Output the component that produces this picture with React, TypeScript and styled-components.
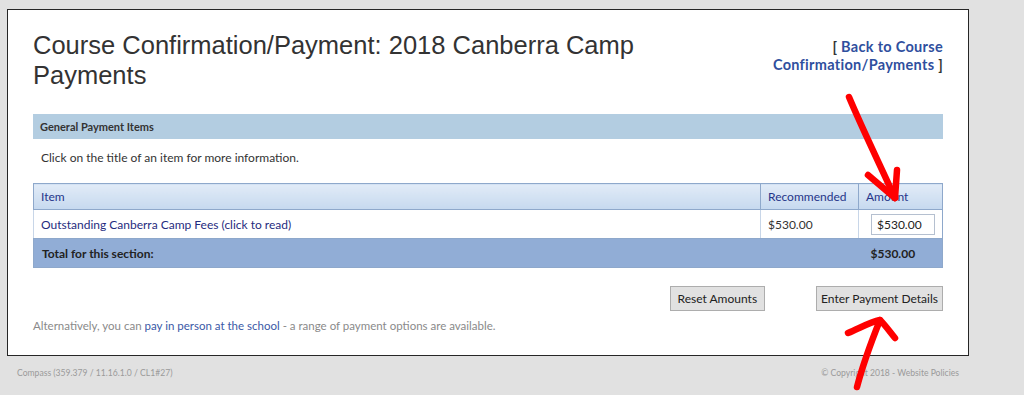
import React from "react";
import styled, { createGlobalStyle } from "styled-components";

const Global = createGlobalStyle`
  html, body {
    margin: 0;
    padding: 0;
    background: #e1e1e1;
  }
  body {
    font-family: "Lato", "Noto Sans", sans-serif;
  }
`;

const Page = styled.div`
  position: relative;
  width: 1024px;
  height: 395px;
  overflow: hidden;
  background: #e1e1e1;
`;

const Panel = styled.div`
  margin: 9px 0 0 7px;
  width: 962px;
  height: 347px;
  box-sizing: border-box;
  background: #fff;
  border: 1px solid #262626;
  padding: 20px 25px 0 25px;
  display: flex;
  flex-direction: column;
`;

const Header = styled.div`
  display: flex;
  justify-content: space-between;
  align-items: flex-start;
`;

const Title = styled.h1`
  margin: 0;
  width: 640px;
  font-family: "Liberation Sans", Arial, sans-serif;
  font-size: 25.5px;
  line-height: 30px;
  font-weight: normal;
  color: #333;
`;

const BackLink = styled.div`
  width: 200px;
  margin-top: 8px;
  text-align: right;
  font-size: 14.5px;
  line-height: 18px;
  font-weight: bold;
  letter-spacing: 0.3px;
  color: #333;
  a {
    color: #2f4f9e;
    text-decoration: none;
  }
`;

const SectionBar = styled.div`
  margin-top: 24px;
  height: 25px;
  line-height: 25px;
  padding-left: 7px;
  background: #b3cde1;
  font-size: 11px;
  font-weight: bold;
  color: #333;
`;

const Intro = styled.p`
  margin: 0;
  padding: 11px 8px 0;
  height: 44px;
  box-sizing: border-box;
  font-size: 12px;
  line-height: 16px;
  color: #333;
`;

const Table = styled.table`
  width: 100%;
  border-collapse: collapse;
  border: 1px solid #8ea8cb;
  font-size: 12px;
`;

const HeadCell = styled.th<{ $w?: number }>`
  height: 25px;
  padding: 0 7px;
  text-align: left;
  font-weight: normal;
  color: #26368a;
  background: linear-gradient(#e1ebf7, #c6d9ef);
  border-left: 1px solid #8ea8cb;
  border-bottom: 1px solid #8ea8cb;
  width: ${(p) => (p.$w ? `${p.$w}px` : "auto")};
`;

const Cell = styled.td`
  height: 28px;
  padding: 0 7px;
  color: #333;
  border-left: 1px solid #c8d6e8;
  border-bottom: 1px solid #8ea8cb;
  a {
    color: #1f2c80;
    text-decoration: none;
  }
`;

const TotalCell = styled.td<{ $amount?: boolean }>`
  height: 28px;
  padding: ${(p) => (p.$amount ? "0 0 0 12px" : "0 8px")};
  background: #91add6;
  font-weight: bold;
  color: #222;
`;

const AmountInput = styled.input`
  width: 64px;
  height: 21px;
  box-sizing: border-box;
  margin-left: 5px;
  padding: 0 5px;
  border: 1px solid #b5c0d0;
  font-family: inherit;
  font-size: 12px;
  color: #222;
`;

const Actions = styled.div`
  margin-top: 18px;
  display: flex;
  justify-content: flex-end;
  gap: 51px;
`;

const Button = styled.button<{ $pad: number }>`
  height: 25px;
  padding: 0 ${(p) => p.$pad}px;
  background: #e1e1e1;
  border: 1px solid #adadad;
  font-family: inherit;
  font-size: 12px;
  color: #222;
`;

const Note = styled.p`
  margin: 8px 0 0;
  font-size: 11.5px;
  color: #8a8a8a;
  a {
    color: #3a59a6;
    text-decoration: none;
  }
`;

const Footer = styled.div`
  display: flex;
  justify-content: space-between;
  padding: 12px 65px 0 17px;
  font-size: 8.6px;
  color: #9a9a9a;
`;

const Annotation = styled.svg`
  position: absolute;
  left: 0;
  top: 0;
  pointer-events: none;
`;

export default function App() {
  return (
    <Page>
      <Global />
      <Panel>
        <Header>
          <Title>Course Confirmation/Payment: 2018 Canberra Camp Payments</Title>
          <BackLink>
            [ <a href="#">Back to Course Confirmation/Payments</a> ]
          </BackLink>
        </Header>
        <SectionBar>General Payment Items</SectionBar>
        <Intro>Click on the title of an item for more information.</Intro>
        <Table>
          <thead>
            <tr>
              <HeadCell>Item</HeadCell>
              <HeadCell $w={83}>Recommended</HeadCell>
              <HeadCell $w={66}>Amount</HeadCell>
            </tr>
          </thead>
          <tbody>
            <tr>
              <Cell>
                <a href="#">Outstanding Canberra Camp Fees (click to read)</a>
              </Cell>
              <Cell>$530.00</Cell>
              <Cell>
                <AmountInput defaultValue="$530.00" />
              </Cell>
            </tr>
            <tr>
              <TotalCell colSpan={2}>Total for this section:</TotalCell>
              <TotalCell $amount>$530.00</TotalCell>
            </tr>
          </tbody>
        </Table>
        <Actions>
          <Button $pad={7}>Reset Amounts</Button>
          <Button $pad={4}>Enter Payment Details</Button>
        </Actions>
        <Note>
          Alternatively, you can <a href="#">pay in person at the school</a> - a range of
          payment options are available.
        </Note>
      </Panel>
      <Footer>
        <span>Compass (359.379 / 11.16.1.0 / CL1#27)</span>
        <span>© Copyright 2018 - Website Policies</span>
      </Footer>
      <Annotation width="1024" height="395" viewBox="0 0 1024 395">
        <g stroke="#ff0000" strokeWidth="6.5" strokeLinecap="round" strokeLinejoin="round" fill="none">
          <path d="M849 97 C 862 128, 880 165, 895 198" />
          <path d="M868 175 L 895 198 L 897 170" />
          <path d="M857 387 C 864 360, 872 340, 880 320" />
          <path d="M848 333 C 860 328, 870 322, 880 320 C 886 326, 890 332, 895 338" />
        </g>
      </Annotation>
    </Page>
  );
}
